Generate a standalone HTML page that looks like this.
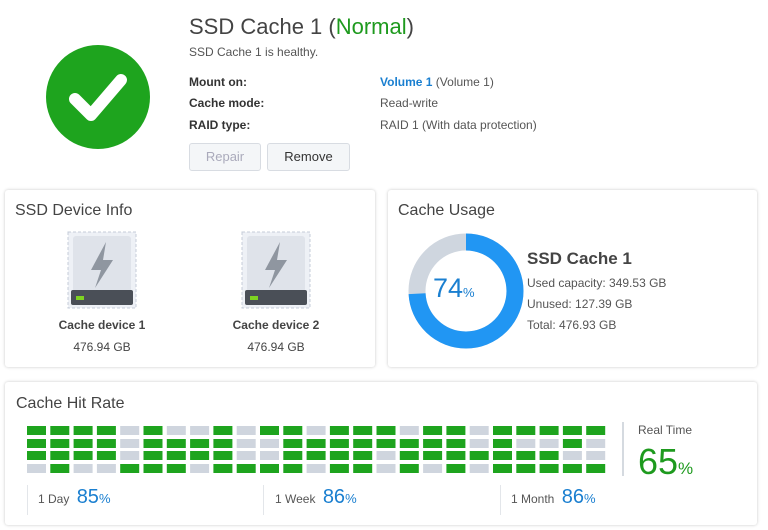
<!DOCTYPE html>
<html><head><style>
body{margin:0;width:768px;height:530px;background:#fff;font-family:"Liberation Sans",sans-serif;color:#444;position:relative;overflow:hidden}
.a{position:absolute;white-space:nowrap}
.card{position:absolute;background:#fff;border-radius:3px;box-shadow:0 0 3px rgba(0,0,0,.22)}
.btn{position:absolute;border:1px solid #d8dce2;border-radius:3px;background:#f4f6f8;font-size:13px;text-align:center;line-height:26px}
.lab{font-size:12px;font-weight:bold;color:#333}
.val{font-size:12px;color:#555}
</style></head><body>
<svg class="a" style="left:0;top:0" width="180" height="180">
<circle cx="98" cy="97" r="52" fill="#1ea41e"/>
<path d="M75 99 L91 115 L121 80" stroke="#fff" stroke-width="12" fill="none" stroke-linecap="round" stroke-linejoin="round"/>
</svg>
<div class="a" style="left:189px;top:14px;font-size:22px;color:#444">SSD Cache 1 (<span style="color:#1e9a1e">Normal</span>)</div>
<div class="a" style="left:189px;top:45px;font-size:12px;color:#555">SSD Cache 1 is healthy.</div>
<div class="a lab" style="left:189px;top:75px">Mount on:</div>
<div class="a lab" style="left:189px;top:96px">Cache mode:</div>
<div class="a lab" style="left:189px;top:118px">RAID type:</div>
<div class="a val" style="left:380px;top:75px"><b style="color:#1a7fd0">Volume 1</b> (Volume 1)</div>
<div class="a val" style="left:380px;top:96px">Read-write</div>
<div class="a val" style="left:380px;top:118px">RAID 1 (With data protection)</div>
<div class="btn" style="left:189px;top:143px;width:70px;height:26px;color:#aab">Repair</div>
<div class="btn" style="left:267px;top:143px;width:81px;height:26px;color:#333">Remove</div>

<div class="card" style="left:5px;top:190px;width:370px;height:177px"></div>
<div class="a" style="left:15px;top:202px;font-size:16px;color:#444">SSD Device Info</div>
<svg class="a" style="left:66px;top:230px" width="72" height="80">
<rect x="2" y="2" width="68" height="76" fill="#eef1f6" stroke="#c5ccd8" stroke-dasharray="3 2"/>
<rect x="7" y="6" width="58" height="56" rx="3" fill="#dfe3ea"/>
<path d="M40 12 L25 40 L35 40 L29 58 L47 30 L37 30 Z" fill="#8f96a0"/>
<rect x="5" y="60" width="62" height="15" rx="2" fill="#4a4f57"/>
<rect x="10" y="66" width="8" height="4" fill="#7ed321"/>
</svg>
<svg class="a" style="left:240px;top:230px" width="72" height="80">
<rect x="2" y="2" width="68" height="76" fill="#eef1f6" stroke="#c5ccd8" stroke-dasharray="3 2"/>
<rect x="7" y="6" width="58" height="56" rx="3" fill="#dfe3ea"/>
<path d="M40 12 L25 40 L35 40 L29 58 L47 30 L37 30 Z" fill="#8f96a0"/>
<rect x="5" y="60" width="62" height="15" rx="2" fill="#4a4f57"/>
<rect x="10" y="66" width="8" height="4" fill="#7ed321"/>
</svg>
<div class="a" style="left:42px;top:318px;width:120px;text-align:center;font-size:12px;font-weight:bold;color:#444">Cache device 1</div>
<div class="a" style="left:42px;top:340px;width:120px;text-align:center;font-size:12px">476.94 GB</div>
<div class="a" style="left:216px;top:318px;width:120px;text-align:center;font-size:12px;font-weight:bold;color:#444">Cache device 2</div>
<div class="a" style="left:216px;top:340px;width:120px;text-align:center;font-size:12px">476.94 GB</div>

<div class="card" style="left:388px;top:190px;width:369px;height:177px"></div>
<div class="a" style="left:398px;top:202px;font-size:16px;color:#444">Cache Usage</div>
<svg class="a" style="left:400px;top:230px" width="132" height="124">
<circle cx="66" cy="61" r="49" fill="none" stroke="#cfd6df" stroke-width="17"/>
<circle cx="66" cy="61" r="49" fill="none" stroke="#2196f3" stroke-width="17" stroke-dasharray="227.8 307.9" transform="rotate(-90 66 61)"/>
</svg>
<div class="a" style="left:433px;top:273px;font-size:27px;color:#1a7fd0">74<span style="font-size:13px">%</span></div>
<div class="a" style="left:527px;top:249px;font-size:17px;font-weight:bold;color:#444">SSD Cache 1</div>
<div class="a val" style="left:527px;top:276px">Used capacity: 349.53 GB</div>
<div class="a val" style="left:527px;top:297px">Unused: 127.39 GB</div>
<div class="a val" style="left:527px;top:318px">Total: 476.93 GB</div>

<div class="card" style="left:5px;top:382px;width:752px;height:143px"></div>
<div class="a" style="left:16px;top:395px;font-size:16px;color:#444">Cache Hit Rate</div>
<svg class="a" style="left:0;top:0" width="620" height="480" id="g"></svg>
<div class="a" style="left:622px;top:422px;width:2px;height:54px;background:#d5dae0"></div>
<div class="a" style="left:638px;top:423px;font-size:12px;color:#555">Real Time</div>
<div class="a" style="left:638px;top:441px;font-size:36px;color:#1e9a1e">65<span style="font-size:17px">%</span></div>
<div class="a" style="left:27px;top:485px;width:1px;height:30px;background:#e3e6ea"></div>
<div class="a" style="left:263px;top:485px;width:1px;height:30px;background:#e3e6ea"></div>
<div class="a" style="left:500px;top:485px;width:1px;height:30px;background:#e3e6ea"></div>
<div class="a" style="left:38px;top:486px;font-size:12px;color:#555">1 Day <span style="font-size:20px;color:#1a7fd0;margin-left:4px">85<span style="font-size:13px">%</span></span></div>
<div class="a" style="left:275px;top:486px;font-size:12px;color:#555">1 Week <span style="font-size:20px;color:#1a7fd0;margin-left:4px">86<span style="font-size:13px">%</span></span></div>
<div class="a" style="left:511px;top:486px;font-size:12px;color:#555">1 Month <span style="font-size:20px;color:#1a7fd0;margin-left:4px">86<span style="font-size:13px">%</span></span></div>
<script>
var rows=["GGGG.G..G.GG.GGG.GG.GGGGG","GGGG.GGGG..GGGGGGGG.G..G.","GGGG.GGGG..GGGG.GGGGGGG..",".G..GGG.GGGG.GG.G.G.GGGGG"];
var s="";var ys=[426,439,451,464];
for(var r=0;r<4;r++)for(var c=0;c<25;c++){s+='<rect x="'+(27+c*23.3).toFixed(1)+'" y="'+ys[r]+'" width="19" height="9" fill="'+(rows[r][c]=="G"?"#1ea41e":"#cfd5de")+'"/>';}
document.getElementById("g").innerHTML=s;
</script>
</body></html>
